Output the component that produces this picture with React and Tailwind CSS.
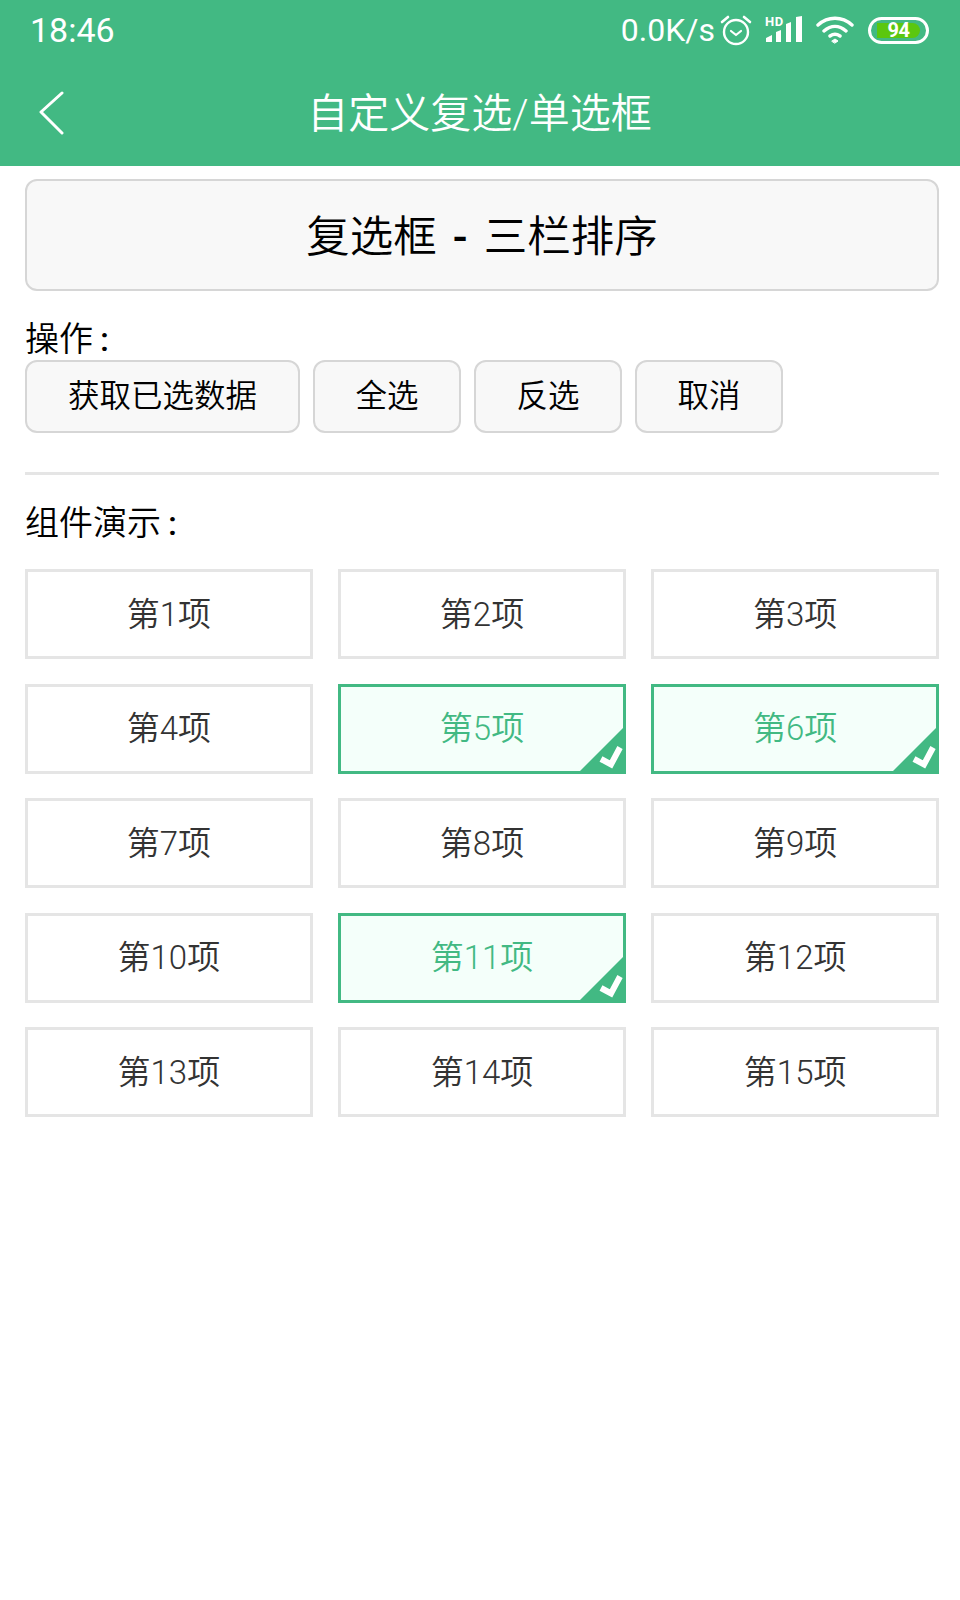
import React from 'react'

const font = 'font-["Roboto","Noto_Sans_CJK_SC",sans-serif]'

const items = Array.from({ length: 15 }, (_, i) => ({
  id: i + 1,
  label: `第${i + 1}项`,
  checked: [5, 6, 11].includes(i + 1),
}))

const actions = [
  { label: '获取已选数据', width: 'w-[275px]' },
  { label: '全选', width: 'w-[148px]' },
  { label: '反选', width: 'w-[148px]' },
  { label: '取消', width: 'w-[148px]' },
]

function StatusIcons() {
  return (
    <div className="flex items-center">
      <span className="text-[32px] font-normal leading-none">0.0K/s</span>
      {/* alarm */}
      <svg width="32" height="32" viewBox="0 0 32 32" fill="none" stroke="white" className="ml-[5px]">
        <circle cx="16" cy="18" r="12" strokeWidth="2.4" />
        <path d="M11 17l5 4 5-4" strokeWidth="2.2" strokeLinecap="round" strokeLinejoin="round" />
        <path d="M2 8l6-5M30 8l-6-5" strokeWidth="2.6" strokeLinecap="round" />
      </svg>
      {/* signal */}
      <div className="relative ml-[13px] w-[38px] h-[30px]">
        <span className="absolute left-0 top-0 text-[13px] font-bold leading-none tracking-[0.5px]">HD</span>
        <svg width="38" height="30" viewBox="0 0 38 30" fill="white">
          <path d="M1 27v-4l6-3v7zM11 27V17l5-2v12zM21 27V9l5-2v20zM31 27V2l6-1v26z" />
        </svg>
      </div>
      {/* wifi */}
      <svg width="38" height="28" viewBox="0 0 38 28" fill="none" stroke="white" strokeWidth="3.4" strokeLinecap="round" className="ml-[13px]">
        <path d="M2 9c10-9 24-9 34 0M8 15c7-6 15-6 22 0M14 20c3-2 7-2 10 0" />
        <path d="M16 25l3-2 3 2-3 2z" fill="white" strokeWidth="1" />
      </svg>
      {/* battery */}
      <div className="ml-[14px] w-[61px] h-[27px] rounded-full border-[3px] border-white flex items-center px-[6px]">
        <div className="w-[46px] h-[15px] rounded-r-full rounded-l-[3px] bg-[#5bc70f] flex items-center justify-center text-[20px] font-bold tracking-[-0.5px] leading-none">
          94
        </div>
      </div>
    </div>
  )
}

function Header() {
  return (
    <div className="bg-[#42b983] text-white h-[166px] shrink-0">
      <div className="h-[60px] pl-[30px] pr-[31px] flex items-center justify-between">
        <span className="text-[34px] font-normal leading-none">18:46</span>
        <StatusIcons />
      </div>
      <div className="relative h-[106px] flex items-center justify-center">
        <svg width="28" height="44" viewBox="0 0 28 44" fill="none" stroke="white" strokeWidth="3" strokeLinecap="round" strokeLinejoin="round" className="absolute left-[38px] top-[31px]">
          <path d="M24 2L3 21l21 21" />
        </svg>
        <span className="text-[41px] font-[350] leading-none pr-[1px] pt-[3px]">自定义复选/单选框</span>
      </div>
    </div>
  )
}

function Item({ item }) {
  return (
    <div
      className={`relative h-[90px] border-[3px] flex items-center justify-center pt-[1px] text-[33px] font-[350] ${
        item.checked ? 'border-[#42b983] bg-[#f4fffa] text-[#42b983]' : 'border-[#e5e5e5] text-[#333333]'
      }`}
    >
      {item.label}
      {item.checked && (
        <svg width="49" height="49" viewBox="0 0 49 49" className="absolute right-[-3px] bottom-[-3px]">
          <path d="M49 0V49H0z" fill="#42b983" />
          <path d="M24 34l10 5.500 9-17" fill="none" stroke="white" strokeWidth="6" />
        </svg>
      )}
    </div>
  )
}

export default function App() {
  return (
    <div className={`${font} w-[960px] min-h-[1600px] bg-white flex flex-col`}>
      <Header />
      <div className="pl-[25px] pr-[21px] pt-[13px]">
        <div className="h-[112px] pt-[5px] border-2 border-[#d6d6d6] rounded-[12px] bg-[#f8f8f8] flex items-center justify-center text-[43.500px] font-[350] text-black">
          复选框<span className="mx-[16px] font-medium">-</span>三栏排序
        </div>

        <div className="mt-[27px] h-[42px] flex items-center text-[34px] font-[350] text-black leading-none">
          操作<span className="ml-[7px] font-medium">:</span>
        </div>
        <div className="flex gap-[13px]">
          {actions.map(a => (
            <div
              key={a.label}
              className={`${a.width} h-[73px] border-2 border-[#d6d6d6] rounded-[12px] bg-[#f8f8f8] flex items-center justify-center pt-[1px] text-[31.500px] font-[350] text-black`}
            >
              {a.label}
            </div>
          ))}
        </div>

        <div className="mt-[39px] h-[3px] bg-[#e5e5e5]" />

        <div className="mt-[26px] h-[44px] flex items-center text-[34px] font-[350] text-black leading-none">
          组件演示<span className="ml-[7px] font-medium">:</span>
        </div>

        <div className="mt-[24px] grid grid-cols-3 gap-x-[25.5px] gap-y-[24.5px]">
          {items.map(item => (
            <Item key={item.id} item={item} />
          ))}
        </div>
      </div>
    </div>
  )
}
